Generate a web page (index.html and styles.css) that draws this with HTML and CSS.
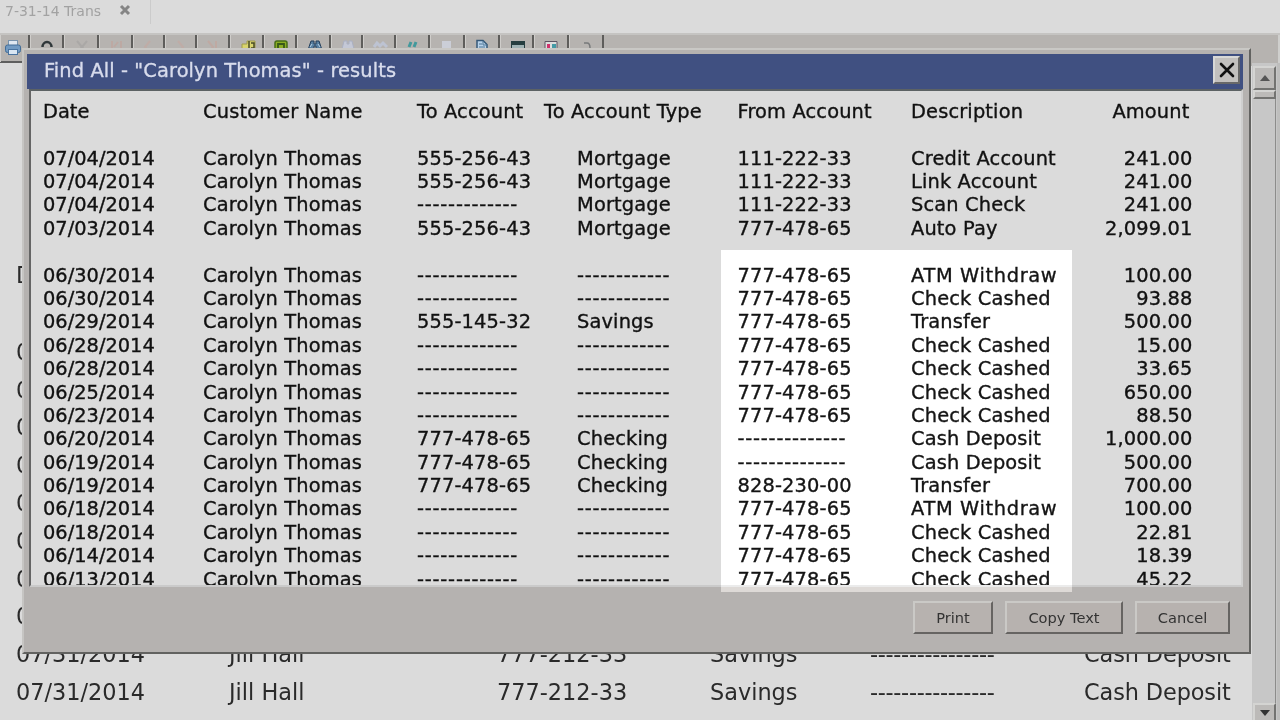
FILE: index.html
```html
<!DOCTYPE html>
<html lang="en">
<head>
<meta charset="utf-8">
<title>7-31-14 Trans</title>
<link rel="stylesheet" href="styles.css">
</head>
<body>
<div class="app">
  <div class="tabs">
    <div class="tab"><span>7-31-14 Trans</span>
      <svg class="tab-x" width="12" height="12" viewBox="0 0 12 12"><path d="M2 2L10 10M10 2L2 10" stroke="#858585" stroke-width="3"/></svg>
    </div>
  </div>
  <div class="toolbar">
    <div class="tool t1"><svg width="18" height="18" viewBox="0 0 18 18"><rect x="4.500" y="1.500" width="9" height="6" fill="#dfe8f1" stroke="#7893ad"/><rect x="1.500" y="6" width="15" height="7.500" rx="2" fill="#719ac2" stroke="#426d97"/><rect x="4.500" y="10.500" width="9" height="5" fill="#d9e6f2" stroke="#4a74a0"/></svg></div>
    <div class="tool t2"><svg width="18" height="18" viewBox="0 0 18 18"><path d="M4.500 8a4.500 5 0 0 1 9 0" fill="none" stroke="#30383a" stroke-width="2.500"/></svg></div>
    <div class="tool t3"><svg width="18" height="18" viewBox="0 0 18 18"><path d="M4 2L14 14M14 2L4 14" stroke="#aaa8a6" stroke-width="2"/></svg></div>
    <div class="tool t4"><svg width="18" height="18" viewBox="0 0 18 18"><path d="M4 2V15M13 2V15M10 3L6 8" stroke="#bda9a3" stroke-width="2"/></svg></div>
    <div class="tool t5"><svg width="18" height="18" viewBox="0 0 18 18"><path d="M11 2L6 8L11 14" fill="none" stroke="#bfaca6" stroke-width="2"/></svg></div>
    <div class="tool t6"><svg width="18" height="18" viewBox="0 0 18 18"><path d="M7 2L12 8L7 14" fill="none" stroke="#bfaca6" stroke-width="2"/></svg></div>
    <div class="tool t7"><svg width="18" height="18" viewBox="0 0 18 18"><path d="M5 2L10 8L5 14M13 2V14" fill="none" stroke="#bfa9a2" stroke-width="2"/></svg></div>
    <div class="tool t8"><svg width="18" height="18" viewBox="0 0 18 18"><path d="M3 5h5V2h8v12H3z" fill="#d9d46d" stroke="#a09b4c"/><path d="M10 2v8M12 4h3v5h-3" fill="none" stroke="#474a26" stroke-width="1.500"/></svg></div>
    <div class="tool t9"><svg width="18" height="18" viewBox="0 0 18 18"><rect x="3" y="2" width="12" height="12" rx="2" fill="#8bad22" stroke="#476d19" stroke-width="1.500"/><path d="M6 9V5h6v4" fill="none" stroke="#385919" stroke-width="1.800"/></svg></div>
    <div class="tool t10"><svg width="18" height="18" viewBox="0 0 18 18"><path d="M5 2h3v3h2V2h3l3 9h-6V7H8v4H2z" fill="#587fa0" stroke="#253f5b"/><path d="M4 8l2-3m6 0l2 3" stroke="#b6d1e6"/></svg></div>
    <div class="tool t11"><svg width="18" height="18" viewBox="0 0 18 18"><path d="M5 2h3v3h2V2h3l2 8H3z" fill="#c4c8d6" stroke="#aab0c2"/></svg></div>
    <div class="tool t12"><svg width="18" height="18" viewBox="0 0 18 18"><path d="M3 8l3-4 3 3 3-3 4 4" fill="none" stroke="#bdc3d2" stroke-width="3"/></svg></div>
    <div class="tool t13"><svg width="18" height="18" viewBox="0 0 18 18"><path d="M5 8l2-5M10 8l2-5" stroke="#43999c" stroke-width="3"/></svg></div>
    <div class="tool t14"><svg width="18" height="18" viewBox="0 0 18 18"><path d="M4 2h9v10H4z" fill="#cbced7"/></svg></div>
    <div class="tool t15"><svg width="18" height="18" viewBox="0 0 18 18"><path d="M4 1.500h6l4 4V15H4z" fill="#b7d2eb" stroke="#355878" stroke-width="1.500"/><path d="M6 5h3M6 8h6M10 2v4h4" fill="none" stroke="#4d7493"/></svg></div>
    <div class="tool t16"><svg width="18" height="18" viewBox="0 0 18 18"><path d="M2.500 2.500h13v10h-13z" fill="#9fb2b4" stroke="#263e40"/><path d="M2 4h14" stroke="#263e40" stroke-width="4"/></svg></div>
    <div class="tool t17"><svg width="18" height="18" viewBox="0 0 18 18"><path d="M3 2.500h12v12H3z" fill="#ddd" stroke="#5d5563"/><path d="M5 5h3v4H5z" fill="#cf316c"/><path d="M10 5h4v4h-4z" fill="#449aa5"/></svg></div>
    <div class="tool t18"><svg width="18" height="18" viewBox="0 0 18 18"><path d="M7 4h3q3 0 3 5" fill="none" stroke="#77797a" stroke-width="1.500"/></svg></div>
    <div class="tool-rest"></div>
  </div>
  <div class="main">
    <div class="ledger">
      <div class="lrow lhead"><span>Date</span></div>
      <div class="lrow"><span>07/31/2014</span></div>
      <div class="lrow"><span>07/31/2014</span></div>
      <div class="lrow"><span>07/31/2014</span></div>
      <div class="lrow"><span>07/31/2014</span></div>
      <div class="lrow"><span>07/31/2014</span></div>
      <div class="lrow"><span>07/31/2014</span></div>
      <div class="lrow"><span>07/31/2014</span></div>
      <div class="lrow"><span>07/31/2014</span></div>
      <div class="lrow"><span>07/31/2014</span><span>Jill Hall</span><span>777-212-33</span><span>Savings</span><span class="ldash">----------------</span><span>Cash Deposit</span></div>
      <div class="lrow"><span>07/31/2014</span><span>Jill Hall</span><span>777-212-33</span><span>Savings</span><span class="ldash">----------------</span><span>Cash Deposit</span></div>
    </div>
    <div class="scroll">
      <div class="sbtn"><svg width="12" height="8" viewBox="0 0 12 8"><path d="M1 7L6 1L11 7z" fill="#555"/></svg></div>
      <div class="thumb"></div>
      <div class="track"></div>
      <div class="sbtn sdown"><svg width="12" height="8" viewBox="0 0 12 8"><path d="M1 1L6 7L11 1z" fill="#333"/></svg></div>
    </div>
  </div>
</div>

<div class="dialog">
  <div class="title"><span>Find All - "Carolyn Thomas" - results</span>
    <div class="close"><svg width="18" height="18" viewBox="0 0 18 18"><path d="M3 3L15 15M15 3L3 15" stroke="#111" stroke-width="2.600" stroke-linecap="round"/></svg></div>
  </div>
  <div class="results">
    <div class="row head"><span>Date</span><span>Customer Name</span><span>To Account</span><span class="type">To Account Type</span><span>From Account</span><span>Description</span><span class="amt">Amount</span></div>
    <div class="row"><span>07/04/2014</span><span>Carolyn Thomas</span><span>555-256-43</span><span>Mortgage</span><span>111-222-33</span><span>Credit Account</span><span class="amt">241.00</span></div>
    <div class="row"><span>07/04/2014</span><span>Carolyn Thomas</span><span>555-256-43</span><span>Mortgage</span><span>111-222-33</span><span>Link Account</span><span class="amt">241.00</span></div>
    <div class="row"><span>07/04/2014</span><span>Carolyn Thomas</span><span class="dash">-------------</span><span>Mortgage</span><span>111-222-33</span><span>Scan Check</span><span class="amt">241.00</span></div>
    <div class="row gap"><span>07/03/2014</span><span>Carolyn Thomas</span><span>555-256-43</span><span>Mortgage</span><span>777-478-65</span><span>Auto Pay</span><span class="amt">2,099.01</span></div>
    <div class="row"><span>06/30/2014</span><span>Carolyn Thomas</span><span class="dash">-------------</span><span class="dash">------------</span><span>777-478-65</span><span class="atm">ATM Withdraw</span><span class="amt">100.00</span></div>
    <div class="row"><span>06/30/2014</span><span>Carolyn Thomas</span><span class="dash">-------------</span><span class="dash">------------</span><span>777-478-65</span><span>Check Cashed</span><span class="amt">93.88</span></div>
    <div class="row"><span>06/29/2014</span><span>Carolyn Thomas</span><span>555-145-32</span><span>Savings</span><span>777-478-65</span><span>Transfer</span><span class="amt">500.00</span></div>
    <div class="row"><span>06/28/2014</span><span>Carolyn Thomas</span><span class="dash">-------------</span><span class="dash">------------</span><span>777-478-65</span><span>Check Cashed</span><span class="amt">15.00</span></div>
    <div class="row"><span>06/28/2014</span><span>Carolyn Thomas</span><span class="dash">-------------</span><span class="dash">------------</span><span>777-478-65</span><span>Check Cashed</span><span class="amt">33.65</span></div>
    <div class="row"><span>06/25/2014</span><span>Carolyn Thomas</span><span class="dash">-------------</span><span class="dash">------------</span><span>777-478-65</span><span>Check Cashed</span><span class="amt">650.00</span></div>
    <div class="row"><span>06/23/2014</span><span>Carolyn Thomas</span><span class="dash">-------------</span><span class="dash">------------</span><span>777-478-65</span><span>Check Cashed</span><span class="amt">88.50</span></div>
    <div class="row"><span>06/20/2014</span><span>Carolyn Thomas</span><span>777-478-65</span><span>Checking</span><span class="dash">--------------</span><span>Cash Deposit</span><span class="amt">1,000.00</span></div>
    <div class="row"><span>06/19/2014</span><span>Carolyn Thomas</span><span>777-478-65</span><span>Checking</span><span class="dash">--------------</span><span>Cash Deposit</span><span class="amt">500.00</span></div>
    <div class="row"><span>06/19/2014</span><span>Carolyn Thomas</span><span>777-478-65</span><span>Checking</span><span>828-230-00</span><span>Transfer</span><span class="amt">700.00</span></div>
    <div class="row"><span>06/18/2014</span><span>Carolyn Thomas</span><span class="dash">-------------</span><span class="dash">------------</span><span>777-478-65</span><span class="atm">ATM Withdraw</span><span class="amt">100.00</span></div>
    <div class="row"><span>06/18/2014</span><span>Carolyn Thomas</span><span class="dash">-------------</span><span class="dash">------------</span><span>777-478-65</span><span>Check Cashed</span><span class="amt">22.81</span></div>
    <div class="row"><span>06/14/2014</span><span>Carolyn Thomas</span><span class="dash">-------------</span><span class="dash">------------</span><span>777-478-65</span><span>Check Cashed</span><span class="amt">18.39</span></div>
    <div class="row"><span>06/13/2014</span><span>Carolyn Thomas</span><span class="dash">-------------</span><span class="dash">------------</span><span>777-478-65</span><span>Check Cashed</span><span class="amt">45.22</span></div>
  </div>
  <div class="footer">
    <div class="btn print">Print</div>
    <div class="btn copy">Copy Text</div>
    <div class="btn cancel">Cancel</div>
  </div>
  <div class="spotlight"></div>
  <div class="spotlight-edge"></div>
</div>
</body>
</html>
```
FILE: styles.css
```css
* { box-sizing: border-box; }
body {
  margin: 0;
  width: 1280px;
  height: 720px;
  overflow: hidden;
  background: #dbdbdb;
  font-family: "DejaVu Sans", sans-serif;
}
.app { display: flex; flex-direction: column; height: 720px; }
.tabs { height: 33px; flex: none; display: flex; }
.tab {
  display: flex;
  justify-content: space-between;
  width: 151px;
  height: 24px;
  padding: 0 19px 0 5px;
  border-right: 1px solid #cbcbcb;
  color: #a2a2a2;
  font-size: 14px;
  line-height: 22px;
  white-space: nowrap;
}
.tab-x { margin-top: 4px; }
.toolbar {
  display: flex;
  flex: none;
  height: 30px;
  border-top: 2px solid #c5c4c2;
  border-bottom: 2px solid #5e5e5e;
  background: #b6b3b0;
}
.tool {
  flex: none;
  width: 33px;
  height: 27px;
  padding: 4px 0 0 5px;
  border-left: 1px solid #cfcdca;
  border-right: 2px solid #5e5d5b;
}
.tool svg { display: block; }
.t1 { width: 30px; padding-left: 3px; }
.t2 { width: 34px; padding-left: 7px; }
.t3 { width: 35px; padding-left: 8px; }
.t4 { width: 34px; padding-left: 8px; }
.t5, .t6 { width: 32px; }
.t8 { width: 34px; padding-left: 8px; }
.t9 { padding-left: 7px; }
.t10 { width: 34px; padding-left: 8px; }
.t11 { width: 32px; padding-left: 7px; }
.t12, .t13 { padding-left: 7px; }
.t13 { width: 34px; }
.t14, .t15, .t17, .t18 { width: 35px; padding-left: 7px; }
.t16 { width: 34px; padding-left: 8px; }
.tool-rest {
  flex: 1;
  height: 31px;
  border-right: 2px solid #cfcfcd;
  background: #b6b3b0;
}
.main { display: flex; flex: 1; min-height: 0; }
.ledger {
  flex: 1;
  padding: 194px 0 0 16px;
  color: #2a2a2a;
  font-size: 22.4px;
  overflow: hidden;
}
.lrow {
  display: grid;
  grid-template-columns: 213px 268px 213px 160px 214px 170px;
  height: 37.8px;
  line-height: 37.8px;
  white-space: nowrap;
}
.lhead { margin-bottom: 39px; }
.lrow span:nth-child(6) { letter-spacing: -.1px; }
.lrow .ldash { letter-spacing: -.3px; }
.scroll {
  display: flex;
  flex-direction: column;
  flex: none;
  width: 28px;
  padding: 3px 1px 0 1px;
  border-right: 3px solid #bebebd;
  background: #c7c7c7;
}
.sbtn, .thumb {
  border: 2px solid;
  border-color: #d4d4d2 #737371 #737371 #d4d4d2;
  background: #bcbab8;
}
.sbtn { display: grid; place-items: center; height: 24px; flex: none; }
.thumb { height: 9px; flex: none; }
.track { flex: 1; border-right: 1px solid #8c8c8b; }
.sdown { height: 17px; border-bottom: 0; }

.dialog {
  position: absolute;
  left: 22px;
  top: 48px;
  width: 1229px;
  height: 606px;
  padding: 4px 6px 0 3px;
  border: 2px solid;
  border-color: #c9c8c5 #626260 #626260 #c6c5c3;
  background: #b5b2b0;
}
.title {
  display: flex;
  justify-content: space-between;
  height: 35px;
  padding: 0 3px 0 17px;
  background: #405081;
  color: #d8dcec;
  font-size: 19.4px;
  line-height: 34px;
  letter-spacing: .1px;
  -webkit-text-stroke: .35px #d8dcec;
}
.title span { font-size: 19.4px; }
.close {
  display: grid;
  place-items: center;
  width: 27px;
  height: 28px;
  margin-top: 2px;
  border: 2px solid;
  border-color: #d8d8d6 #686868 #686868 #d8d8d6;
  background: #c2c0be;
}
.results {
  height: 498px;
  margin: 0 0 0 2px;
  padding: 9px 0 0 12px;
  border: 2px solid;
  border-color: #5c6264 #cfcfcf #cacaca #656565;
  background: #dbdbdb;
  overflow: hidden;
  color: #111;
  font-size: 19.4px;
  letter-spacing: .15px;
  -webkit-text-stroke: .35px #111;
}
.row {
  display: grid;
  grid-template-columns: 160px 214px 160px 160.5px 173.5px 147px 134.5px;
  height: 23.4px;
  line-height: 23.4px;
  white-space: nowrap;
}
.row span:first-child { letter-spacing: 0; }
.row .dash { letter-spacing: .78px; }
.row .atm { letter-spacing: .65px; }
.head, .gap { margin-bottom: 23.3px; }
.type { margin-left: -33px; }
.amt { text-align: right; }
.head .amt { padding-right: 3px; }
.footer {
  display: flex;
  justify-content: flex-end;
  padding: 14px 13px 0 0;
  color: #333;
  font-size: 14.6px;
}
.btn {
  height: 33px;
  border: 2px solid;
  border-color: #cac9c6 #666462 #666462 #cac9c6;
  background: #b7b2af;
  text-align: center;
  line-height: 30px;
}
.print { width: 80px; }
.copy { width: 118px; margin: 0 12px; }
.cancel { width: 95px; }
.spotlight, .spotlight-edge {
  position: absolute;
  left: 697px;
  width: 351px;
}
.spotlight {
  top: 200px;
  height: 337px;
  background: #242424;
  mix-blend-mode: color-dodge;
}
.spotlight-edge { top: 537px; height: 5px; background: #dedad7; }
```
